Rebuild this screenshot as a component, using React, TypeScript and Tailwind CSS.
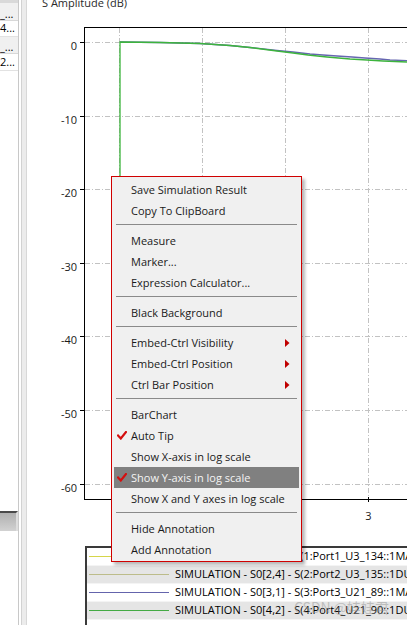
import React from "react";

const FONT = "font-['Open_Sans',sans-serif]";

type ItemProps = { label: string; check?: boolean; arrow?: boolean; hi?: boolean };

function Item({ label, check, arrow, hi }: ItemProps) {
  return (
    <div
      className={
        hi
          ? "relative mx-[2px] flex h-[21px] items-center bg-[#808080] pl-[17px] pt-[2px] text-[#f4f4f4]"
          : "relative mx-[2px] flex h-[21px] items-center pl-[17px] pt-[2px] text-[#1a1a1a]"
      }
    >
      {check && (
        <svg className="absolute left-[3px] top-[6px]" width="10" height="9" viewBox="0 0 10 9">
          <path d="M1 4.5 L3.8 7.5 L9 1" fill="none" stroke="#d40f0f" strokeWidth="2.2" strokeLinecap="square" />
        </svg>
      )}
      <span className="whitespace-nowrap">{label}</span>
      {arrow && (
        <svg className="absolute right-[9px] top-[7px]" width="5" height="8" viewBox="0 0 5 8">
          <polygon points="0,0 4.5,4 0,8" fill="#c00000" />
        </svg>
      )}
    </div>
  );
}

function Sep() {
  return (
    <div className="h-[9px] pt-[3px]">
      <div className="mx-[4px] h-px bg-[#8a8a8a]" />
    </div>
  );
}

function Menu() {
  return (
    <div
      className={`absolute left-[84px] top-[176px] w-[191px] border border-[#d00000] bg-[#f0f0f0] pt-[2px] pb-px text-[11px] shadow-[3px_3px_3px_rgba(0,0,0,0.28)] ${FONT}`}
    >
      <Item label="Save Simulation Result" />
      <Item label="Copy To ClipBoard" />
      <Sep />
      <Item label="Measure" />
      <Item label="Marker..." />
      <Item label="Expression Calculator..." />
      <Sep />
      <Item label="Black Background" />
      <Sep />
      <Item label="Embed-Ctrl Visibility" arrow />
      <Item label="Embed-Ctrl Position" arrow />
      <Item label="Ctrl Bar Position" arrow />
      <Sep />
      <Item label="BarChart" />
      <Item label="Auto Tip" check />
      <Item label="Show X-axis in log scale" />
      <Item label="Show Y-axis in log scale" check hi />
      <Item label="Show X and Y axes in log scale" />
      <Sep />
      <Item label="Hide Annotation" />
      <Item label="Add Annotation" />
    </div>
  );
}

const gy = [42, 116, 189, 263, 336, 410, 484];
const ylab = ["0", "-10", "-20", "-30", "-40", "-50", "-60"];
const gx = [119, 202, 285, 368];

const green =
  "120,499 120,42 160,42.5 200,43.5 230,45.5 250,47.5 277,51 293,53 308,55 327,57 350,59 367,60 383,61 407,62";
const blue =
  "120,42 160,42.5 200,43.5 230,45.5 250,47.5 277,50.5 293,52 310,54 323,55 337,56 352,57 365,58 380,59 390,60 407,60.7";

function Chart() {
  return (
    <svg width={380} height={546} viewBox="27 0 380 546" className="block shrink-0">
      <text x={42} y={7} fontFamily="Open Sans" fontSize={11} fill="#2a2a2a">
        S Amplitude (dB)
      </text>
      {gy.map((y) => (
        <line key={"h" + y} x1={85} x2={407} y1={y + 0.5} y2={y + 0.5} stroke="#c2c2c2" strokeDasharray="5 2 1 2" />
      ))}
      {gx.map((x) => (
        <line key={"v" + x} x1={x + 0.5} x2={x + 0.5} y1={28} y2={498} stroke="#c2c2c2" strokeDasharray="5 2 1 2" />
      ))}
      <path d="M84.5 27.5 H407 M84.5 27 V500 M84 499.5 H407" stroke="#000" strokeWidth={1} fill="none" />
      {gy.map((y) => (
        <line key={"t" + y} x1={80} x2={84} y1={y + 0.5} y2={y + 0.5} stroke="#000" />
      ))}
      <line x1={368.5} x2={368.5} y1={497} y2={502} stroke="#000" />
      {gy.map((y, i) => (
        <text key={"l" + y} x={77} y={y + 8} textAnchor="end" fontFamily="Open Sans" fontSize={11} fill="#1a1a1a">
          {ylab[i]}
        </text>
      ))}
      <text x={368.5} y={520} textAnchor="middle" fontFamily="Open Sans" fontSize={11} fill="#1a1a1a">
        3
      </text>
      <polyline points={blue} fill="none" stroke="#6666b0" strokeWidth={1.3} />
      <polyline points={green} fill="none" stroke="#3db43d" strokeWidth={1.3} />
    </svg>
  );
}

const rows = [
  { c: "#d6d64a", bg: "bg-white", t: "SIMULATION - S0[1,3] - S(1:Port1_U3_134::1MA" },
  { c: "#bcbc8a", bg: "bg-[#e5e5e5]", t: "SIMULATION - S0[2,4] - S(2:Port2_U3_135::1DU" },
  { c: "#6464ac", bg: "bg-white", t: "SIMULATION - S0[3,1] - S(3:Port3_U21_89::1MA" },
  { c: "#44aa44", bg: "bg-[#e5e5e5]", t: "SIMULATION - S0[4,2] - S(4:Port4_U21_90::1DU" },
];

function Legend() {
  return (
    <div className={`relative ml-[58px] flex-1 overflow-hidden border-l-2 border-t-2 border-[#3a3a3a] bg-white text-[11px] text-black ${FONT}`}>
      {rows.map((r) => (
        <div key={r.t} className={`flex h-[18px] items-center border-b border-[#f4f4f4] ${r.bg}`}>
          <div className="ml-[2px] h-px w-[80px] shrink-0" style={{ backgroundColor: r.c }} />
          <span className="ml-[6px] whitespace-nowrap">{r.t}</span>
        </div>
      ))}
      <div className="absolute left-[207px] top-[49px] whitespace-nowrap text-[14px] text-[rgba(150,150,150,0.5)] font-['Noto_Sans_CJK_SC',sans-serif]">
        CSDN @娃娃君
      </div>
    </div>
  );
}

function LeftPanel() {
  return (
    <div className={`flex h-full shrink-0 ${FONT}`}>
      <div className="flex h-full w-[19px] flex-col border-r border-[#c8c8c8] bg-white text-[11px] text-black">
        <div className="h-[3px] bg-[#d9d9d9]" />
        <div className="flex h-[18px] items-end overflow-hidden whitespace-nowrap border-b border-[#d8d8d8] bg-[#f0f0f0] pb-[1px] leading-none">_...</div>
        <div className="flex h-[16px] items-center overflow-hidden whitespace-nowrap border-b border-[#e2e2e2] bg-white">4...</div>
        <div className="flex h-[17px] items-end overflow-hidden whitespace-nowrap border-b border-[#d8d8d8] bg-[#f0f0f0] pb-[1px] leading-none">_...</div>
        <div className="flex h-[17px] items-center overflow-hidden whitespace-nowrap border-b border-[#e2e2e2] bg-white">2...</div>
        <div className="flex-1" />
        <div className="h-[20px] border-t-2 border-r-2 border-t-[#4a4a4a] border-r-[#dedede] bg-gradient-to-b from-[#b0b0b0] to-[#d2d2d2]" />
        <div className="h-[94px]" />
      </div>
      <div className="h-full w-[2px] bg-white" />
      <div className="h-full w-px bg-[#d2d2d2]" />
      <div className="h-full w-[4px] bg-[#ececec]" />
      <div className="h-full w-px bg-[#d8d8d8]" />
    </div>
  );
}

export default function App() {
  return (
    <div className="flex h-[625px] w-[407px] overflow-hidden bg-white">
      <LeftPanel />
      <div className="relative flex h-full flex-1 flex-col">
        <Chart />
        <Legend />
        <Menu />
      </div>
    </div>
  );
}
